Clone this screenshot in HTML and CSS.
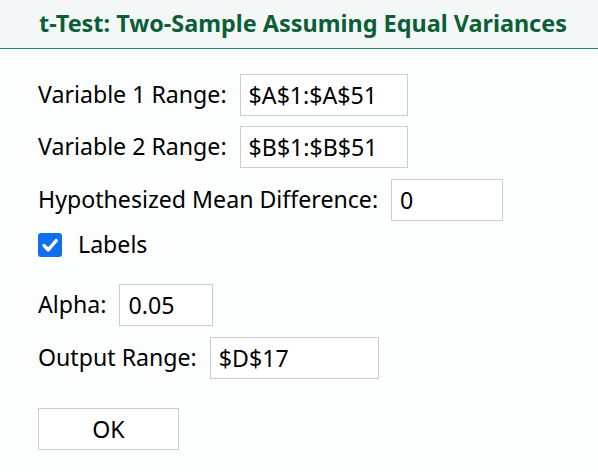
FILE: index.html
```html
<!DOCTYPE html>
<html>
<head>
<meta charset="utf-8">
<link rel="stylesheet" href="styles.css">
</head>
<body>
<header class="title-bar"><h1 class="title">t-Test: Two-Sample Assuming Equal Variances</h1></header>
<main class="form">
  <div class="row r1"><label class="lbl">Variable 1 Range:</label><div class="field w-range">$A$1:$A$51</div></div>
  <div class="row r2"><label class="lbl">Variable 2 Range:</label><div class="field w-range">$B$1:$B$51</div></div>
  <div class="row r3"><label class="lbl">Hypothesized Mean Difference:</label><div class="field w-hyp">0</div></div>
  <div class="check-row"><span class="box"><svg width="24" height="24" viewBox="0 0 24 24"><path d="M6 12.5 L10.2 16.8 L18.2 7.6" fill="none" stroke="#fff" stroke-width="3.4" stroke-linecap="round" stroke-linejoin="round"/></svg></span><span class="check-lbl">Labels</span></div>
  <div class="row r4"><label class="lbl">Alpha:</label><div class="field w-alpha">0.05</div></div>
  <div class="row r5"><label class="lbl">Output Range:</label><div class="field w-out">$D$17</div></div>
  <div class="actions"><button class="ok">OK</button></div>
</main>
</body>
</html>
```
FILE: styles.css
```css
html, body {
  margin: 0;
  padding: 0;
  background: #fcfefe;
  font-family: "Noto Sans", "Open Sans", sans-serif;
  color: #000;
}
.title-bar {
  height: 48px;
  background: #f3f7f8;
  border-bottom: 1px solid #2e8b57;
  display: flex;
  align-items: center;
  justify-content: center;
  padding-left: 8px;
}
.title {
  margin: 0;
  font-size: 23.4px;
  line-height: 1;
  font-weight: 700;
  color: #0b5e35;
}
.form {
  padding: 25px 0 0 38px;
  display: flex;
  flex-direction: column;
  align-items: flex-start;
}
.row {
  display: flex;
  align-items: center;
  gap: 13px;
}
.lbl, .check-lbl {
  font-size: 23.15px;
  line-height: 1.2;
}
.field {
  box-sizing: border-box;
  height: 42px;
  border: 1px solid #cccccc;
  background: #fff;
  padding: 0 8px;
  font-size: 23.15px;
  display: flex;
  align-items: center;
}
.w-range { width: 168px; }
.w-hyp { width: 112px; }
.w-alpha { width: 94px; }
.w-out { width: 169px; }
.r2 { margin-top: 10px; }
.r3 { margin-top: 11px; }
.check-row {
  margin-top: 12px;
  display: flex;
  align-items: center;
  gap: 16px;
  height: 24px;
}
.box {
  width: 24px;
  height: 24px;
  border-radius: 3px;
  background: #0f6ff0;
  display: block;
}
.box svg { display: block; }
.r4 { margin-top: 27px; }
.r5 { margin-top: 11px; }
.actions { margin-top: 29px; display: flex; }
.ok {
  box-sizing: border-box;
  width: 141px;
  height: 42px;
  background: #fff;
  border: 1px solid #cccccc;
  font-family: inherit;
  font-size: 23.15px;
  color: #000;
  padding: 0;
}
```
